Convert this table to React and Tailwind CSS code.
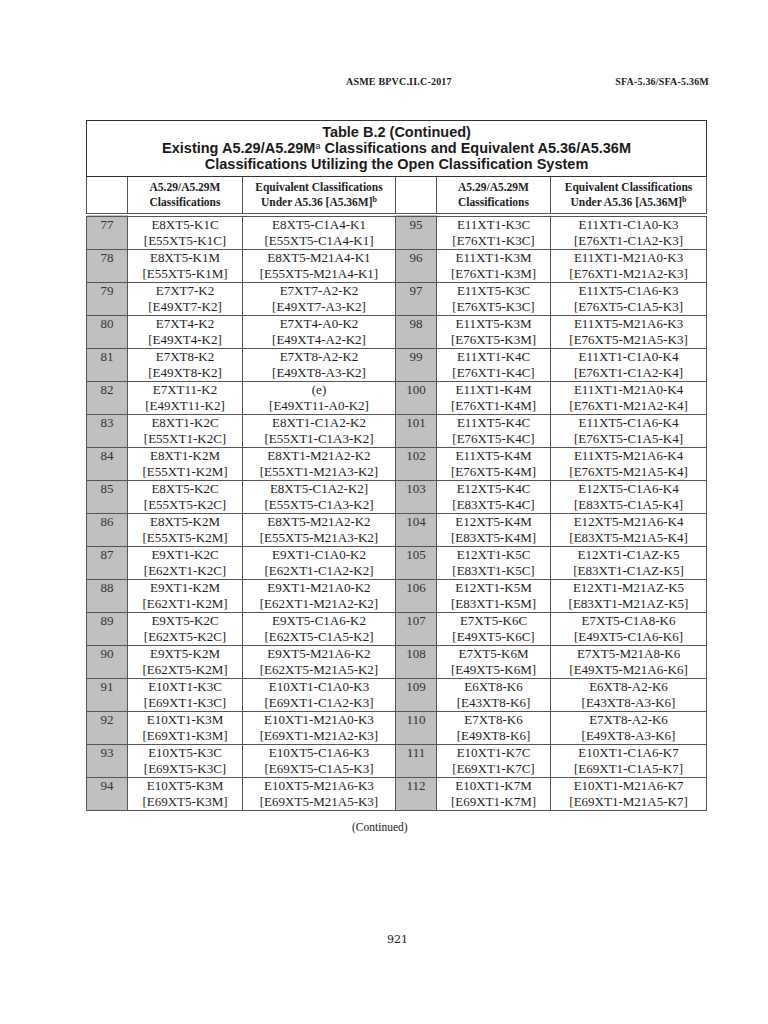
const LEFT_ROWS = [
  ['77', 'E8XT5-K1C', '[E55XT5-K1C]', 'E8XT5-C1A4-K1', '[E55XT5-C1A4-K1]'],
  ['78', 'E8XT5-K1M', '[E55XT5-K1M]', 'E8XT5-M21A4-K1', '[E55XT5-M21A4-K1]'],
  ['79', 'E7XT7-K2', '[E49XT7-K2]', 'E7XT7-A2-K2', '[E49XT7-A3-K2]'],
  ['80', 'E7XT4-K2', '[E49XT4-K2]', 'E7XT4-A0-K2', '[E49XT4-A2-K2]'],
  ['81', 'E7XT8-K2', '[E49XT8-K2]', 'E7XT8-A2-K2', '[E49XT8-A3-K2]'],
  ['82', 'E7XT11-K2', '[E49XT11-K2]', '(e)', '[E49XT11-A0-K2]'],
  ['83', 'E8XT1-K2C', '[E55XT1-K2C]', 'E8XT1-C1A2-K2', '[E55XT1-C1A3-K2]'],
  ['84', 'E8XT1-K2M', '[E55XT1-K2M]', 'E8XT1-M21A2-K2', '[E55XT1-M21A3-K2]'],
  ['85', 'E8XT5-K2C', '[E55XT5-K2C]', 'E8XT5-C1A2-K2]', '[E55XT5-C1A3-K2]'],
  ['86', 'E8XT5-K2M', '[E55XT5-K2M]', 'E8XT5-M21A2-K2', '[E55XT5-M21A3-K2]'],
  ['87', 'E9XT1-K2C', '[E62XT1-K2C]', 'E9XT1-C1A0-K2', '[E62XT1-C1A2-K2]'],
  ['88', 'E9XT1-K2M', '[E62XT1-K2M]', 'E9XT1-M21A0-K2', '[E62XT1-M21A2-K2]'],
  ['89', 'E9XT5-K2C', '[E62XT5-K2C]', 'E9XT5-C1A6-K2', '[E62XT5-C1A5-K2]'],
  ['90', 'E9XT5-K2M', '[E62XT5-K2M]', 'E9XT5-M21A6-K2', '[E62XT5-M21A5-K2]'],
  ['91', 'E10XT1-K3C', '[E69XT1-K3C]', 'E10XT1-C1A0-K3', '[E69XT1-C1A2-K3]'],
  ['92', 'E10XT1-K3M', '[E69XT1-K3M]', 'E10XT1-M21A0-K3', '[E69XT1-M21A2-K3]'],
  ['93', 'E10XT5-K3C', '[E69XT5-K3C]', 'E10XT5-C1A6-K3', '[E69XT5-C1A5-K3]'],
  ['94', 'E10XT5-K3M', '[E69XT5-K3M]', 'E10XT5-M21A6-K3', '[E69XT5-M21A5-K3]'],
]

const RIGHT_ROWS = [
  ['95', 'E11XT1-K3C', '[E76XT1-K3C]', 'E11XT1-C1A0-K3', '[E76XT1-C1A2-K3]'],
  ['96', 'E11XT1-K3M', '[E76XT1-K3M]', 'E11XT1-M21A0-K3', '[E76XT1-M21A2-K3]'],
  ['97', 'E11XT5-K3C', '[E76XT5-K3C]', 'E11XT5-C1A6-K3', '[E76XT5-C1A5-K3]'],
  ['98', 'E11XT5-K3M', '[E76XT5-K3M]', 'E11XT5-M21A6-K3', '[E76XT5-M21A5-K3]'],
  ['99', 'E11XT1-K4C', '[E76XT1-K4C]', 'E11XT1-C1A0-K4', '[E76XT1-C1A2-K4]'],
  ['100', 'E11XT1-K4M', '[E76XT1-K4M]', 'E11XT1-M21A0-K4', '[E76XT1-M21A2-K4]'],
  ['101', 'E11XT5-K4C', '[E76XT5-K4C]', 'E11XT5-C1A6-K4', '[E76XT5-C1A5-K4]'],
  ['102', 'E11XT5-K4M', '[E76XT5-K4M]', 'E11XT5-M21A6-K4', '[E76XT5-M21A5-K4]'],
  ['103', 'E12XT5-K4C', '[E83XT5-K4C]', 'E12XT5-C1A6-K4', '[E83XT5-C1A5-K4]'],
  ['104', 'E12XT5-K4M', '[E83XT5-K4M]', 'E12XT5-M21A6-K4', '[E83XT5-M21A5-K4]'],
  ['105', 'E12XT1-K5C', '[E83XT1-K5C]', 'E12XT1-C1AZ-K5', '[E83XT1-C1AZ-K5]'],
  ['106', 'E12XT1-K5M', '[E83XT1-K5M]', 'E12XT1-M21AZ-K5', '[E83XT1-M21AZ-K5]'],
  ['107', 'E7XT5-K6C', '[E49XT5-K6C]', 'E7XT5-C1A8-K6', '[E49XT5-C1A6-K6]'],
  ['108', 'E7XT5-K6M', '[E49XT5-K6M]', 'E7XT5-M21A8-K6', '[E49XT5-M21A6-K6]'],
  ['109', 'E6XT8-K6', '[E43XT8-K6]', 'E6XT8-A2-K6', '[E43XT8-A3-K6]'],
  ['110', 'E7XT8-K6', '[E49XT8-K6]', 'E7XT8-A2-K6', '[E49XT8-A3-K6]'],
  ['111', 'E10XT1-K7C', '[E69XT1-K7C]', 'E10XT1-C1A6-K7', '[E69XT1-C1A5-K7]'],
  ['112', 'E10XT1-K7M', '[E69XT1-K7M]', 'E10XT1-M21A6-K7', '[E69XT1-M21A5-K7]'],
]

const serif = "font-['Liberation_Serif','Times_New_Roman',serif]"

function NumCell({ value }) {
  return (
    <td className="h-[32px] border border-[#555] bg-[#c0c0c0] p-0 text-center align-top leading-[16px] text-[#333]">
      {value}
    </td>
  )
}

function TextCell({ top, bottom }) {
  return (
    <td className="h-[32px] border border-[#555] p-0 text-center align-top leading-[16px]">
      <div>{top}</div>
      <div>{bottom}</div>
    </td>
  )
}

function HeadCell({ children }) {
  return (
    <th
      className="h-[38px] border border-[#555] border-b-[4px] px-0 align-middle text-[11.5px] font-bold leading-[15px] text-[#222]"
      style={{ borderBottomStyle: 'double' }}
    >
      {children}
    </th>
  )
}

export default function App() {
  return (
    <div className={`h-[1024px] w-[768px] bg-white text-[#1e1e1e] ${serif}`}>
      <header className="flex justify-between pl-[346px] pr-[59px] pt-[74px] text-[10px] font-bold tracking-[0.2px] text-[#222]">
        <span>ASME BPVC.II.C-2017</span>
        <span>SFA-5.36/SFA-5.36M</span>
      </header>

      <div className="ml-[86px] mt-[31px] w-[620px]">
        <table className="w-[620px] table-fixed border-collapse border border-[#333] text-[13px]">
          <colgroup>
            <col className="w-[41px]" />
            <col className="w-[115px]" />
            <col className="w-[153px]" />
            <col className="w-[41px]" />
            <col className="w-[114px]" />
            <col className="w-[156px]" />
          </colgroup>
          <thead>
            <tr>
              <th
                colSpan={6}
                className="h-[56px] border border-[#333] pt-[3px] text-center align-top font-['Liberation_Sans_Narrow','Liberation_Sans',Arial,sans-serif] text-[14.5px] font-bold leading-[16px] text-[#1a1a1a]"
              >
                <div>Table B.2 (Continued)</div>
                <div>
                  Existing A5.29/A5.29M<sup className="text-[9px] font-normal">a</sup> Classifications and
                  Equivalent A5.36/A5.36M
                </div>
                <div>Classifications Utilizing the Open Classification System</div>
              </th>
            </tr>
            <tr>
              <HeadCell />
              <HeadCell>
                A5.29/A5.29M
                <br />
                Classifications
              </HeadCell>
              <HeadCell>
                Equivalent Classifications
                <br />
                Under A5.36 [A5.36M]<sup className="text-[8px]">b</sup>
              </HeadCell>
              <HeadCell />
              <HeadCell>
                A5.29/A5.29M
                <br />
                Classifications
              </HeadCell>
              <HeadCell>
                Equivalent Classifications
                <br />
                Under A5.36 [A5.36M]<sup className="text-[8px]">b</sup>
              </HeadCell>
            </tr>
          </thead>
          <tbody>
            {LEFT_ROWS.map((left, i) => {
              const right = RIGHT_ROWS[i]
              return (
                <tr key={left[0]}>
                  <NumCell value={left[0]} />
                  <TextCell top={left[1]} bottom={left[2]} />
                  <TextCell top={left[3]} bottom={left[4]} />
                  <NumCell value={right[0]} />
                  <TextCell top={right[1]} bottom={right[2]} />
                  <TextCell top={right[3]} bottom={right[4]} />
                </tr>
              )
            })}
          </tbody>
        </table>
      </div>

      <p className="mt-[9px] pl-[352px] text-[11.5px] leading-[14px] text-[#222]">(Continued)</p>

      <p className="mt-[98px] pl-[387px] font-['DejaVu_Serif',serif] text-[11px] text-[#222]">921</p>
    </div>
  )
}
